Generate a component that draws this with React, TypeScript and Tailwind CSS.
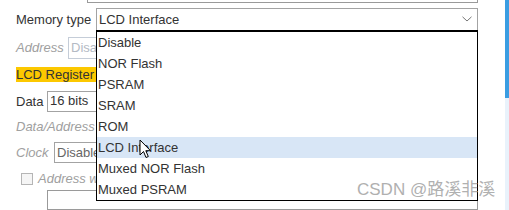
import React from "react";

const options = [
  "Disable",
  "NOR Flash",
  "PSRAM",
  "SRAM",
  "ROM",
  "LCD Interface",
  "Muxed NOR Flash",
  "Muxed PSRAM",
];

const selected = "LCD Interface";

const App: React.FC = () => {
  return (
    <div className="relative flex h-[210px] w-[509px] overflow-hidden bg-white font-['Liberation_Sans',Arial,sans-serif] text-[13px] text-[#333]">
      <div className="flex w-[505px] flex-col">
        {/* box above, only its bottom edge shows */}
        <div className="ml-[87px] h-[3px] w-[391px] border-x border-b border-[#9a9a9a]" />

        {/* memory type select */}
        <div className="mt-[5px] flex h-[23px] items-center pl-[16px]">
          <span className="w-[80px] shrink-0 leading-none">Memory type</span>
          <div className="flex h-[23px] w-[382px] shrink-0 items-center justify-between border border-[#a3a3a3] pl-[2px] pr-[5px]">
            <span className="leading-none">LCD Interface</span>
            <svg width="10" height="6" viewBox="0 0 10 6" fill="none" stroke="#777" strokeWidth="1">
              <path d="M0.5 0.8 L5 5 L9.5 0.8" />
            </svg>
          </div>
        </div>

        {/* everything below is cut at the list's left edge */}
        <div className="flex w-[96px] flex-col overflow-hidden whitespace-nowrap">
          {/* address */}
          <div className="mt-[6px] flex h-[22px] items-center pl-[16px]">
            <span className="w-[52px] shrink-0 italic leading-none text-[#a0a0a0]">Address</span>
            <div className="flex h-[22px] w-[28px] shrink-0 items-center overflow-hidden border border-r-0 border-[#c5cdd8] pl-[2px] text-[#b4bac4]">
              Disa
            </div>
          </div>

          {/* LCD register heading */}
          <div className="ml-[16px] mt-[8px] flex h-[19px] w-[80px] items-center overflow-hidden bg-[#fcc800] leading-none">
            LCD Register
          </div>

          {/* data */}
          <div className="mt-[9px] flex h-[21px] items-center pl-[16px]">
            <span className="w-[31px] shrink-0 leading-none">Data</span>
            <div className="flex h-[21px] w-[49px] shrink-0 items-center overflow-hidden border border-r-0 border-[#a3a3a3] pl-[2px]">
              16 bits
            </div>
          </div>

          {/* data/address */}
          <div className="mt-[7px] flex h-[20px] items-center overflow-hidden pl-[16px] italic leading-none text-[#a0a0a0]">
            Data/Address
          </div>

          {/* clock */}
          <div className="mt-[8px] flex h-[21px] items-center pl-[16px]">
            <span className="w-[38px] shrink-0 italic leading-none text-[#a0a0a0]">Clock</span>
            <div className="flex h-[21px] w-[42px] shrink-0 items-center overflow-hidden border border-r-0 border-[#a3a3a3] pl-[2px] text-[#666]">
              Disable
            </div>
          </div>

          {/* checkbox */}
          <div className="mt-[8px] flex h-[19px] items-center overflow-hidden pl-[21px]">
            <span className="h-[12px] w-[12px] shrink-0 border border-[#b5b5b5] bg-[#f5f5f5]" />
            <span className="ml-[5px] italic leading-none text-[#a0a0a0]">Address w</span>
          </div>
        </div>

        {/* box below */}
        <div className="ml-[47px] mt-[4px] h-[20px] w-[431px] shrink-0 border border-[#9a9a9a]" />
      </div>

      {/* right side bar */}
      <div className="flex w-[4px] flex-col">
        <div className="h-[98px] bg-[#3a9de2]" />
        <div className="flex-1 bg-[#e9f2fb]" />
      </div>

      {/* open dropdown list */}
      <ul className="absolute left-[96px] top-[30px] w-[382px] border border-t-2 border-black bg-white">
        {options.map((opt) => (
          <li
            key={opt}
            className={`flex h-[21px] items-center pl-[1px] leading-none ${
              opt === selected ? "bg-[#d8e6f6]" : ""
            }`}
          >
            {opt}
          </li>
        ))}
      </ul>

      {/* mouse cursor */}
      <svg
        className="absolute left-[139px] top-[139px]"
        width="13"
        height="20"
        viewBox="0 0 13 20"
      >
        <path
          d="M1 1 L1 16 L4.5 12.5 L7 18.5 L9.3 17.5 L6.8 11.7 L11.5 11.7 Z"
          fill="white"
          stroke="black"
          strokeWidth="1"
          strokeLinejoin="round"
        />
      </svg>

      {/* watermark */}
      <div className="absolute left-[357px] top-[181px] font-['Liberation_Sans','Noto_Sans_CJK_SC',sans-serif] text-[17px] leading-none text-[#b0b0b0]">
        CSDN @路溪非溪
      </div>
    </div>
  );
};

export default App;
